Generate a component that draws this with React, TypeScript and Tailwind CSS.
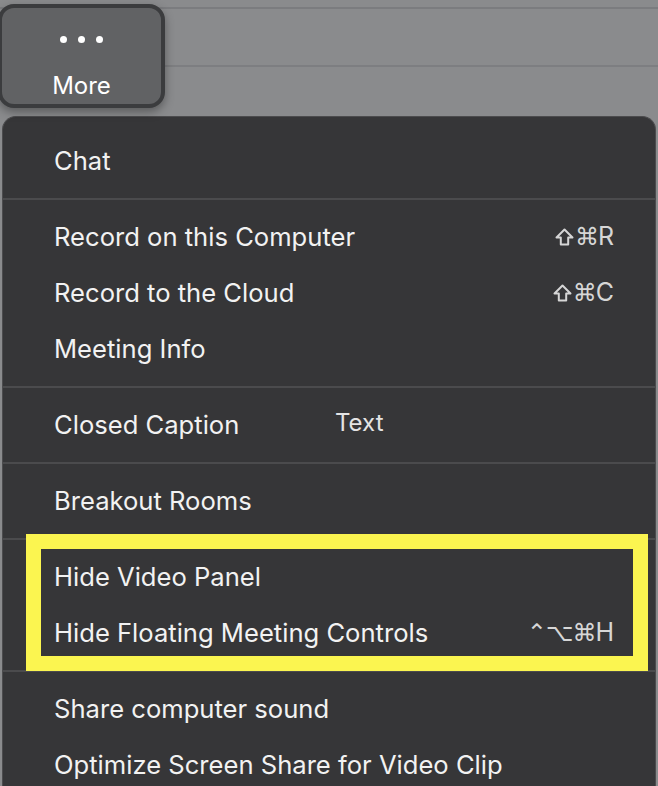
import React from "react";

type Item = { label: string; shortcut?: string; extra?: string };

const sections: Item[][] = [
  [{ label: "Chat" }],
  [
    { label: "Record on this Computer", shortcut: "⇧⌘R" },
    { label: "Record to the Cloud", shortcut: "⇧⌘C" },
    { label: "Meeting Info" },
  ],
  [{ label: "Closed Caption", extra: "Text" }],
  [{ label: "Breakout Rooms" }],
  [
    { label: "Hide Video Panel" },
    { label: "Hide Floating Meeting Controls", shortcut: "⌃⌥⌘H" },
  ],
  [
    { label: "Share computer sound" },
    { label: "Optimize Screen Share for Video Clip" },
  ],
];

function ShiftKey() {
  return (
    <svg width="19" height="18" viewBox="0 0 19 18" className="mr-[1px]">
      <path
        d="M9.5 1.5 L17.5 9.5 H13.2 V16.5 H5.8 V9.5 H1.5 Z"
        fill="none"
        stroke="#d6d6d6"
        strokeWidth="2"
        strokeLinejoin="round"
      />
    </svg>
  );
}

function Shortcut({ keys }: { keys: string }) {
  return (
    <span className="flex items-center text-[#d6d6d6] [font-family:'DejaVu_Sans',Inter,sans-serif] text-[24px] tracking-[-1px]">
      {Array.from(keys).map((k, i) =>
        k === "⇧" ? (
          <ShiftKey key={i} />
        ) : (
          <span key={i} className={k === "R" || k === "C" || k === "H" ? "[font-family:Inter,sans-serif] text-[25px]" : ""}>
            {k}
          </span>
        )
      )}
    </span>
  );
}

function Row({ item }: { item: Item }) {
  return (
    <div className="flex h-[56px] items-center justify-between pl-[51px] pr-[42px]">
      <div className="flex items-center">
        <span className={item.extra ? "w-[281px] text-[#f2f2f2]" : "text-[#f2f2f2]"}>
          {item.label}
        </span>
        {item.extra && <span className="-mt-[3px] text-[24px] text-[#e4e4e4]">{item.extra}</span>}
      </div>
      {item.shortcut && <Shortcut keys={item.shortcut} />}
    </div>
  );
}

export default function App() {
  return (
    <div className="relative h-[786px] w-[658px] overflow-hidden bg-[#8a8b8d] [font-family:Inter,'Liberation_Sans',sans-serif] text-[25.6px]">
      {/* backdrop lines of the toolbar */}
      <div className="absolute left-0 right-0 top-[7px] h-[2px] bg-[#7b7c7f]"></div>
      <div className="absolute left-0 right-0 top-[65px] h-[2px] bg-[#7d7e81]"></div>

      {/* More button */}
      <div className="h-[116px] pt-[4px]">
        <div className="relative -ml-[2px] flex h-[104px] w-[167px] flex-col items-center rounded-[16px] border-[4px] border-[#3b3c3e] bg-[#616264] shadow-[0_4px_10px_rgba(0,0,0,0.35)]">
          <div className="mt-[28px] flex gap-[11px]">
            <span className="size-[7px] rounded-full bg-white"></span>
            <span className="size-[7px] rounded-full bg-white"></span>
            <span className="size-[7px] rounded-full bg-white"></span>
          </div>
          <span className="mt-[31px] leading-none text-[24px] text-white">More</span>
        </div>
      </div>

      {/* Menu */}
      <div className="ml-[2px] mr-[2px] rounded-t-[14px] border-x border-t border-[#4c4c4e] bg-[#363638] pt-[16px]">
        {sections.map((section, i) => (
          <div key={i}>
            {i > 0 && <div className="h-[2px] bg-[#4b4b4d]"></div>}
            <div className={i === 0 ? "pb-[9px]" : "py-[9px]"}>
              {section.map((item) => (
                <Row key={item.label} item={item} />
              ))}
            </div>
          </div>
        ))}
      </div>

      {/* highlight annotation */}
      <div className="absolute left-[26px] top-[534px] h-[137px] w-[622px] border-[15px] border-[#fbf550]"></div>
    </div>
  );
}
